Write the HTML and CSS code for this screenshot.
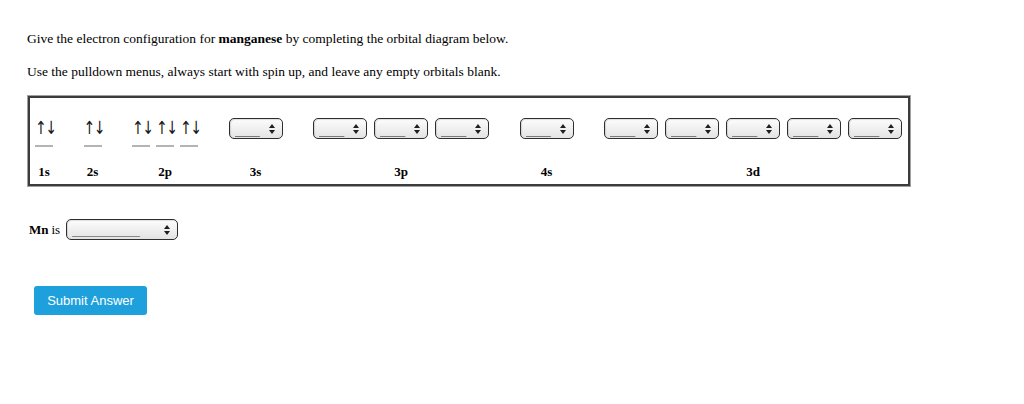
FILE: index.html
```html
<!doctype html>
<html lang="en">
    <head>
        <meta charset="UTF-8" />
        <meta name="viewport" content="width=device-width, initial-scale=1.0" />
        <title>Orbital Diagram</title>
        <link rel="stylesheet" href="styles.css">
    </head>
    <body>
        <div class="question">
            <p class="prompt">
                Give the electron configuration for <b>manganese</b> by completing the orbital diagram below.
            </p>
            <p class="prompt">
                Use the pulldown menus, always start with spin up, and leave any empty orbitals blank.
            </p>

            <div class="diagram">
                <div class="subshell">
                    <div class="orbitals">
                        <span class="filled"><span class="spin">↑↓</span></span>
                    </div>
                    <div class="label">1s</div>
                </div>
                <div class="subshell">
                    <div class="orbitals">
                        <span class="filled"><span class="spin">↑↓</span></span>
                    </div>
                    <div class="label">2s</div>
                </div>
                <div class="subshell">
                    <div class="orbitals">
                        <span class="filled"><span class="spin">↑↓</span></span>
                        <span class="filled"><span class="spin">↑↓</span></span>
                        <span class="filled"><span class="spin">↑↓</span></span>
                    </div>
                    <div class="label">2p</div>
                </div>
                <div class="subshell">
                    <div class="orbitals">
                        <span class="pick"><select><option>___</option><option>↑</option><option>↑↓</option></select><svg viewBox="0 0 6 10"><path d="M3 0L6 4H0Z M3 10L6 6H0Z"/></svg></span>
                    </div>
                    <div class="label">3s</div>
                </div>
                <div class="subshell">
                    <div class="orbitals">
                        <span class="pick"><select><option>___</option><option>↑</option><option>↑↓</option></select><svg viewBox="0 0 6 10"><path d="M3 0L6 4H0Z M3 10L6 6H0Z"/></svg></span>
                        <span class="pick"><select><option>___</option><option>↑</option><option>↑↓</option></select><svg viewBox="0 0 6 10"><path d="M3 0L6 4H0Z M3 10L6 6H0Z"/></svg></span>
                        <span class="pick"><select><option>___</option><option>↑</option><option>↑↓</option></select><svg viewBox="0 0 6 10"><path d="M3 0L6 4H0Z M3 10L6 6H0Z"/></svg></span>
                    </div>
                    <div class="label">3p</div>
                </div>
                <div class="subshell">
                    <div class="orbitals">
                        <span class="pick"><select><option>___</option><option>↑</option><option>↑↓</option></select><svg viewBox="0 0 6 10"><path d="M3 0L6 4H0Z M3 10L6 6H0Z"/></svg></span>
                    </div>
                    <div class="label">4s</div>
                </div>
                <div class="subshell">
                    <div class="orbitals">
                        <span class="pick"><select><option>___</option><option>↑</option><option>↑↓</option></select><svg viewBox="0 0 6 10"><path d="M3 0L6 4H0Z M3 10L6 6H0Z"/></svg></span>
                        <span class="pick"><select><option>___</option><option>↑</option><option>↑↓</option></select><svg viewBox="0 0 6 10"><path d="M3 0L6 4H0Z M3 10L6 6H0Z"/></svg></span>
                        <span class="pick"><select><option>___</option><option>↑</option><option>↑↓</option></select><svg viewBox="0 0 6 10"><path d="M3 0L6 4H0Z M3 10L6 6H0Z"/></svg></span>
                        <span class="pick"><select><option>___</option><option>↑</option><option>↑↓</option></select><svg viewBox="0 0 6 10"><path d="M3 0L6 4H0Z M3 10L6 6H0Z"/></svg></span>
                        <span class="pick"><select><option>___</option><option>↑</option><option>↑↓</option></select><svg viewBox="0 0 6 10"><path d="M3 0L6 4H0Z M3 10L6 6H0Z"/></svg></span>
                    </div>
                    <div class="label">3d</div>
                </div>
            </div>

            <div class="answer">
                <b>Mn</b> is
                <span class="pick wide"><select><option>_________</option><option>paramagnetic</option><option>diamagnetic</option></select><svg viewBox="0 0 6 10"><path d="M3 0L6 4H0Z M3 10L6 6H0Z"/></svg></span>
            </div>

            <button type="button" class="submit-btn">Submit Answer</button>
        </div>
    </body>
</html>
```

FILE: styles.css
```css
* {
    margin: 0;
    padding: 0;
    box-sizing: border-box;
}

body {
    font-family: "Liberation Serif", "Times New Roman", serif;
    font-size: 13.5px;
    color: #000;
    background: #fff;
}

.question {
    padding: 31px 0 0 27px;
}

.prompt {
    line-height: 16px;
    margin-bottom: 17px;
}

.prompt + .prompt {
    margin-bottom: 15px;
}

/* orbital diagram box */
.diagram {
    width: 884px;
    display: flex;
    align-items: flex-start;
    gap: 30.5px;
    padding: 22px 0 6px 7px;
    border: 1px solid #a0a0a0;
    box-shadow: inset 0 0 0 2px #3c3c3c;
}

.subshell {
    display: flex;
    flex-direction: column;
    align-items: center;
}

.orbitals {
    display: flex;
    gap: 6px;
    height: 32px;
}

.subshell:nth-child(n + 4) .orbitals {
    gap: 7px;
}

.filled {
    width: 18px;
    margin-top: 2px;
    height: 27px;
    font-family: "DejaVu Sans", sans-serif;
    font-size: 14px;
    line-height: 16px;
    letter-spacing: -1.5px;
    text-align: center;
    color: #1a1a1a;
    border-bottom: 2px solid #b4b4b4;
}

/* arrows are drawn a bit taller than the font gives */
.spin {
    display: inline-block;
    transform: scaleY(1.3);
}

.label {
    margin-top: 14px;
    line-height: 16px;
    font-size: 13px;
    font-weight: bold;
}

/* pulldown menus */
.pick {
    position: relative;
    display: inline-block;
    width: 54px;
    height: 21px;
}

.pick select {
    appearance: none;
    -webkit-appearance: none;
    width: 100%;
    height: 100%;
    padding: 0 0 0 5px;
    border: 1px solid #2e2e2e;
    border-radius: 5px;
    background: linear-gradient(to bottom, #fdfdfd, #e3e3e3);
    box-shadow: inset 1px 1px 1px rgba(0, 0, 0, 0.12);
    font-family: "Liberation Sans", Arial, sans-serif;
    font-size: 15px;
    color: #7a7a7a;
    outline: none;
}

.pick svg {
    position: absolute;
    right: 8px;
    top: 6px;
    width: 6px;
    height: 10px;
    fill: #1e1e1e;
    pointer-events: none;
}

.pick.wide {
    width: 112px;
    margin-left: 2px;
}

.pick.wide select {
    font-size: 13.5px;
}

.answer {
    display: flex;
    align-items: center;
    gap: 4px;
    margin-top: 32px;
    padding-left: 2px;
    line-height: 16px;
    font-size: 13px;
}

.answer b {
    margin-right: -1px;
}

.submit-btn {
    margin: 46px 0 0 7px;
    width: 113px;
    height: 29px;
    border: none;
    border-radius: 3px;
    background: #1ea0dc;
    color: #fff;
    font-family: "Liberation Sans", Arial, sans-serif;
    font-size: 13px;
    cursor: pointer;
}
```
